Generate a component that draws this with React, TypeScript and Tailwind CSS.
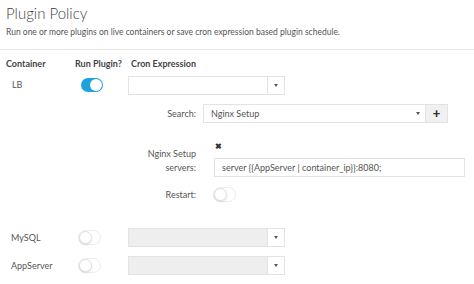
import React from "react";

function Toggle({ on }: { on?: boolean }) {
  return on ? (
    <div className="w-[22px] h-[14px] rounded-full bg-[#1fa3dd] flex items-center justify-end pr-[1px]">
      <div className="w-[12px] h-[12px] rounded-full bg-white" />
    </div>
  ) : (
    <div className="w-[23px] h-[15px] rounded-full bg-white border border-[#ececec] flex items-center">
      <div className="w-[13px] h-[13px] rounded-full bg-white border border-[#e0e0e0] shadow-[0_1px_2px_rgba(0,0,0,0.12)]" />
    </div>
  );
}

function Caret() {
  return (
    <svg width="4" height="3" viewBox="0 0 4 3">
      <path d="M0 0 L4 0 L2 3 Z" fill="#555" />
    </svg>
  );
}

function CronSelect({ disabled }: { disabled?: boolean }) {
  return (
    <div className="flex w-[157px] h-[19px] border border-[#e3e3e3]">
      <div className={`flex-1 ${disabled ? "bg-[#eeeeee]" : "bg-white"}`} />
      <div className="w-[17px] border-l border-[#e3e3e3] bg-white flex items-center justify-center">
        <Caret />
      </div>
    </div>
  );
}

export default function App() {
  return (
    <div
      className="w-[474px] h-[284px] bg-white overflow-hidden text-[#555]"
      style={{ fontFamily: "Lato, 'Open Sans', sans-serif" }}
    >
      <div className="pl-[6px] pt-[3px]">
        <div className="text-[15px] leading-[20px] font-light text-[#3f3f3f]">Plugin Policy</div>
        <div className="text-[8.5px] leading-[10px] mt-[4px] text-[#555]">
          Run one or more plugins on live containers or save cron expression based plugin schedule.
        </div>
      </div>
      <div className="mt-[12px] h-px bg-[#e8e8e8]" />

      <div className="pl-[6px] mt-[9px]">
        <div className="flex text-[9px] leading-[10px] font-bold text-[#444]">
          <div className="w-[69px]">Container</div>
          <div className="w-[56px]">Run Plugin?</div>
          <div>Cron Expression</div>
        </div>

        <div className="flex items-center mt-[6px] h-[20px]">
          <div className="w-[75px] pl-[6px] text-[9px]">LB</div>
          <div className="w-[47px]">
            <Toggle on />
          </div>
          <CronSelect />
        </div>

        <div className="flex items-center mt-[9px]">
          <div className="w-[190px] text-right text-[9px] pr-[0px]">Search:</div>
          <div className="ml-[7px] flex w-[245px] h-[19px] border border-[#e3e3e3]">
            <div className="flex-1 flex items-center pl-[7px] text-[9px] bg-white">Nginx Setup</div>
            <div className="w-[14px] flex items-center justify-center">
              <Caret />
            </div>
            <div className="w-[22px] border-l border-[#e3e3e3] bg-[#f1f1f1] flex items-center justify-center text-[13px] font-black text-[#333] leading-none">
              +
            </div>
          </div>
        </div>

        <div className="flex mt-[18px]">
          <div className="w-[190px] text-right text-[9px] leading-[14px] pt-[6px]">
            <div>Nginx Setup</div>
            <div>servers:</div>
          </div>
          <div className="ml-[18px]">
            <div className="text-[8px] leading-[10px] font-bold text-[#333] pl-[1px]">✖</div>
            <div className="mt-[7px] w-[251px] h-[19px] border border-[#e3e3e3] flex items-center pl-[7px] text-[9px]">
              server {"{{"}AppServer | container_ip{"}}"}:8080;
            </div>
          </div>
        </div>

        <div className="flex items-center mt-[10px]">
          <div className="w-[190px] text-right text-[9px]">Restart:</div>
          <div className="ml-[17px]">
            <Toggle />
          </div>
        </div>

        <div className="flex items-center mt-[26px] h-[19px]">
          <div className="w-[72px] pl-[5px] text-[9px]">MySQL</div>
          <div className="w-[50px]">
            <Toggle />
          </div>
          <CronSelect disabled />
        </div>

        <div className="flex items-center mt-[9px] h-[19px]">
          <div className="w-[72px] pl-[5px] text-[9px]">AppServer</div>
          <div className="w-[50px]">
            <Toggle />
          </div>
          <CronSelect disabled />
        </div>
      </div>
    </div>
  );
}
